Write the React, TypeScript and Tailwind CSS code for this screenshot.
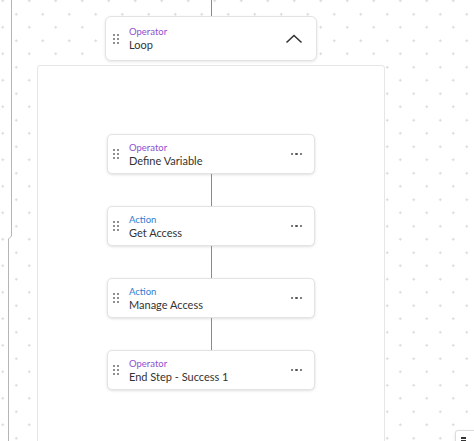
import React from "react";

function Handle() {
  return (
    <div className="grid grid-cols-2 gap-[2px] w-[6px]">
      {Array.from({ length: 6 }).map((_, i) => (
        <span key={i} className="block w-[2px] h-[2px] rounded-full bg-[#6b6b6b]" />
      ))}
    </div>
  );
}

function Dots() {
  return (
    <div className="flex gap-[2px] items-center mr-[12px]">
      <span className="block w-[2.5px] h-[2.5px] rounded-full bg-[#555]" />
      <span className="block w-[2.5px] h-[2.5px] rounded-full bg-[#555]" />
      <span className="block w-[2.5px] h-[2.5px] rounded-full bg-[#555]" />
    </div>
  );
}

function Card({ kind, title }: { kind: "Operator" | "Action"; title: string }) {
  return (
    <div className="w-[208px] h-[40px] bg-white border border-[#e3e3e3] rounded-[5px] shadow-[0_1px_3px_rgba(0,0,0,0.12)] flex items-center pl-[5px]">
      <Handle />
      <div className="flex flex-col ml-[10px] flex-1 pt-[1px]">
        <span
          className={
            "text-[9.5px] leading-[12px] " +
            (kind === "Operator" ? "text-[#9050d0]" : "text-[#2f7bd3]")
          }
        >
          {kind}
        </span>
        <span className="text-[11px] leading-[14px] text-[#333]">{title}</span>
      </div>
      <Dots />
    </div>
  );
}

function Connector({ h }: { h: string }) {
  return <div className={"w-px bg-[#8a8a8a] " + h} />;
}

export default function App() {
  return (
    <div
      className="relative w-[474px] h-[441px] overflow-hidden bg-white font-['Lato',sans-serif] [background-image:radial-gradient(circle,#d4d4d4_0.9px,transparent_1.3px),radial-gradient(circle,#d4d4d4_0.9px,transparent_1.3px)] [background-size:26.5px_26.5px] [background-position:3px_1px,16px_14px]"
    >
      {/* left edge line */}
      <svg className="absolute left-0 top-0" width="20" height="441">
        <path d="M11.5 0 V236 L8.5 239 V441" fill="none" stroke="#b5b5b5" strokeWidth="1" />
      </svg>

      <div className="absolute left-[37px] top-0 w-[348px] flex flex-col items-center">
        <Connector h="h-[16px]" />
        {/* Loop card */}
        <div className="w-[212px] h-[45px] bg-white border border-[#e3e3e3] rounded-[6px] shadow-[0_1px_3px_rgba(0,0,0,0.1)] flex items-center pl-[7px]">
          <Handle />
          <div className="flex flex-col ml-[10px] flex-1">
            <span className="text-[9.5px] leading-[12px] text-[#9050d0]">Operator</span>
            <span className="text-[11px] leading-[14px] text-[#333]">Loop</span>
          </div>
          <svg width="18" height="10" viewBox="0 0 18 10" className="mr-[13px]">
            <path d="M1.5 8.5 L9 1.5 L16.5 8.5" fill="none" stroke="#333" strokeWidth="1.6" />
          </svg>
        </div>

        {/* Loop container */}
        <div className="mt-[4px] w-[348px] h-[400px] bg-white border border-[#e6e6e6] rounded-t-[3px] flex flex-col items-center pt-[68px]">
          <Card kind="Operator" title="Define Variable" />
          <Connector h="h-[32px]" />
          <Card kind="Action" title="Get Access" />
          <Connector h="h-[32px]" />
          <Card kind="Action" title="Manage Access" />
          <Connector h="h-[32px]" />
          <Card kind="Operator" title="End Step - Success 1" />
        </div>
      </div>

      {/* bottom-right control */}
      <div className="absolute left-[455px] top-[430px] w-[30px] h-[30px] bg-white border border-[#dcdcdc] rounded-[3px] shadow-sm">
        <div className="absolute left-[5px] top-[6px] flex flex-col gap-[1px]">
          <span className="block w-[5px] h-[1.5px] bg-[#333]" />
          <span className="block w-[5px] h-[1.5px] bg-[#333]" />
          <span className="block w-[5px] h-[1.5px] bg-[#333]" />
        </div>
      </div>
    </div>
  );
}
